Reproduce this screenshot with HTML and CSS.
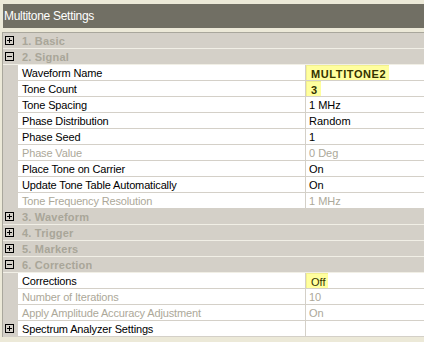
FILE: index.html
```html
<!DOCTYPE html>
<html>
<head>
<meta charset="utf-8">
<link rel="stylesheet" href="styles.css">
</head>
<body>
<div class="title">Multitone Settings</div>
<div class="grid">
  <div class="cat"><span class="gut"><span class="box plus"></span></span><span class="ctext">1. Basic</span></div>
  <div class="cat"><span class="gut"><span class="box"></span></span><span class="ctext">2. Signal</span></div>
  <div class="prop"><span class="gut"></span><span class="name">Waveform Name</span><span class="val"><span class="hl bold">MULTITONE2</span></span></div>
  <div class="prop"><span class="gut"></span><span class="name">Tone Count</span><span class="val"><span class="hl bold">3</span></span></div>
  <div class="prop"><span class="gut"></span><span class="name">Tone Spacing</span><span class="val">1 MHz</span></div>
  <div class="prop"><span class="gut"></span><span class="name">Phase Distribution</span><span class="val">Random</span></div>
  <div class="prop"><span class="gut"></span><span class="name">Phase Seed</span><span class="val">1</span></div>
  <div class="prop dis"><span class="gut"></span><span class="name">Phase Value</span><span class="val">0 Deg</span></div>
  <div class="prop"><span class="gut"></span><span class="name">Place Tone on Carrier</span><span class="val">On</span></div>
  <div class="prop"><span class="gut"></span><span class="name">Update Tone Table Automatically</span><span class="val">On</span></div>
  <div class="prop dis"><span class="gut"></span><span class="name">Tone Frequency Resolution</span><span class="val">1 MHz</span></div>
  <div class="cat"><span class="gut"><span class="box plus"></span></span><span class="ctext">3. Waveform</span></div>
  <div class="cat"><span class="gut"><span class="box plus"></span></span><span class="ctext">4. Trigger</span></div>
  <div class="cat"><span class="gut"><span class="box plus"></span></span><span class="ctext">5. Markers</span></div>
  <div class="cat"><span class="gut"><span class="box"></span></span><span class="ctext">6. Correction</span></div>
  <div class="prop"><span class="gut"></span><span class="name">Corrections</span><span class="val"><span class="hl">Off</span></span></div>
  <div class="prop dis"><span class="gut"></span><span class="name">Number of Iterations</span><span class="val">10</span></div>
  <div class="prop dis"><span class="gut"></span><span class="name">Apply Amplitude Accuracy Adjustment</span><span class="val">On</span></div>
  <div class="prop"><span class="gut"><span class="box plus"></span></span><span class="name">Spectrum Analyzer Settings</span><span class="val"></span></div>
</div>
</body>
</html>
```
FILE: styles.css
```css
html, body {
  margin: 0;
  padding: 0;
  background: #ECE9D8;
  font-family: "Liberation Sans", Arial, sans-serif;
  font-size: 11px;
  width: 424px;
  height: 342px;
  overflow: hidden;
}
.title {
  margin: 4px 0 0 3px;
  height: 24px;
  line-height: 25px;
  background: #716F64;
  color: #FFFFFF;
  font-size: 12px;
  padding-left: 1px;
  letter-spacing: -0.3px;
}
.grid {
  margin: 4px 0 0 2px;
  border-top: 1px solid #A9A79C;
  border-left: 1px solid #A9A79C;
}
.cat, .prop {
  display: flex;
  height: 16px;
  overflow: hidden;
}
.gut {
  width: 15px;
  flex: none;
  height: 16px;
  background: #D4D0C8;
  position: relative;
}
.cat {
  background: #D4D0C8;
  box-sizing: border-box;
  border-bottom: 1px solid #F1EFE6;
}
.cat .gut { height: 15px; }
.ctext {
  padding-left: 4px;
  height: 15px;
  line-height: 17px;
  font-weight: bold;
  color: #A9A699;
  letter-spacing: 0.2px;
  overflow: hidden;
}
.box {
  position: absolute;
  left: 2px;
  top: 3px;
  width: 7px;
  height: 7px;
  border: 1px solid #000;
}
.box::before {
  content: "";
  position: absolute;
  left: 1px;
  top: 3px;
  width: 5px;
  height: 1px;
  background: #000;
}
.box.plus::after {
  content: "";
  position: absolute;
  left: 3px;
  top: 1px;
  width: 1px;
  height: 5px;
  background: #000;
}
.name {
  width: 288px;
  flex: none;
  box-sizing: border-box;
  height: 16px;
  line-height: 17px;
  padding-left: 4px;
  background: #FFFFFF;
  color: #000;
  border-bottom: 1px solid #D4D0C8;
  border-right: 1px solid #D4D0C8;
  letter-spacing: -0.15px;
  white-space: nowrap;
  overflow: hidden;
}
.val {
  flex: 1;
  box-sizing: border-box;
  height: 16px;
  line-height: 17px;
  padding-left: 3px;
  background: #FFFFFF;
  color: #000;
  border-bottom: 1px solid #D4D0C8;
  white-space: nowrap;
  overflow: hidden;
}
.val:has(.hl) { padding-left: 0; }
.dis .name, .dis .val { color: #ACA899; }
.hl {
  display: inline-block;
  vertical-align: top;
  box-sizing: border-box;
  height: 15px;
  padding: 0 3px 0 4px;
  background: #FFFF9E;
  border-left: 1px solid #F2F08E;
  border-top: 1px solid #F2F08E;
  line-height: 16px;
  color: #333300;
}
.hl.bold {
  font-weight: bold;
  letter-spacing: 0.6px;
}
```
